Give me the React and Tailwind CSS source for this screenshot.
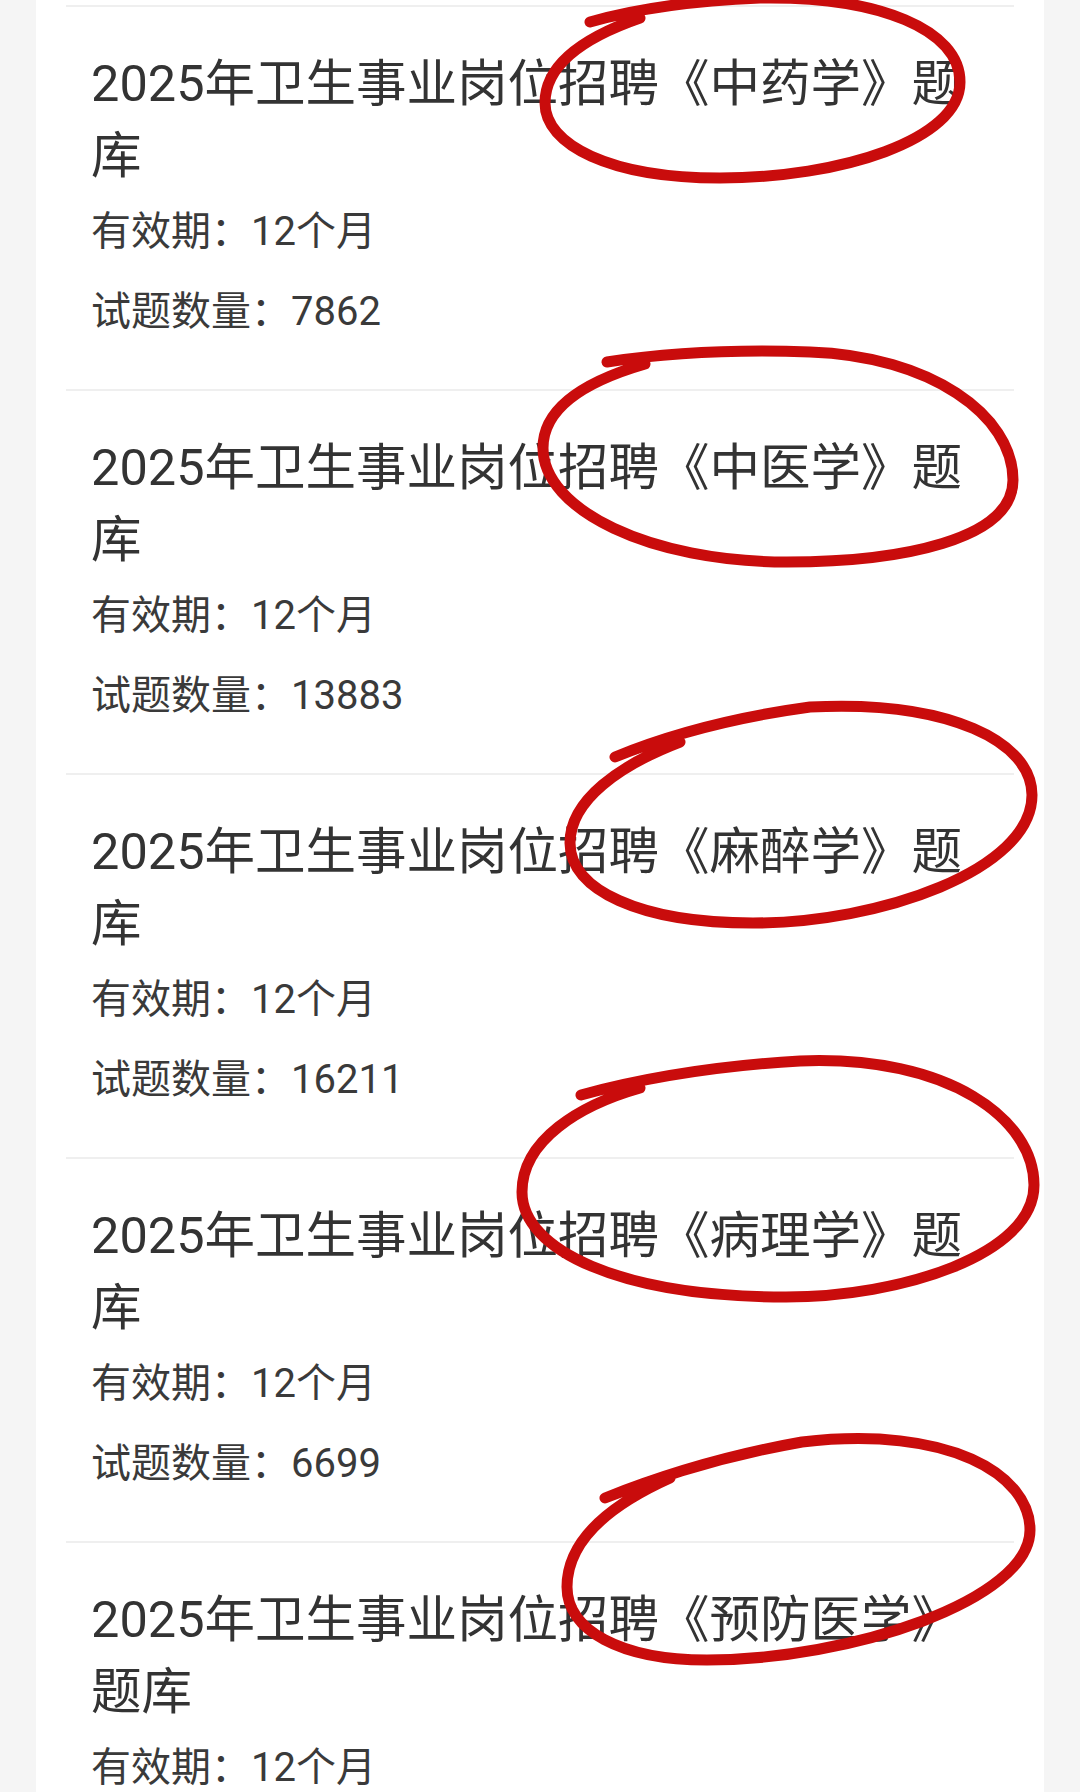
const items = [
  { name: '中药学', count: '7862' },
  { name: '中医学', count: '13883' },
  { name: '麻醉学', count: '16211' },
  { name: '病理学', count: '6699' },
  { name: '预防医学', count: '' },
];

// hand-drawn red marks over each subject name
const marks = [
  'M 590 22 Q 660 2 760 -2 C 880 -4 960 30 960 82 C 960 140 840 178 720 178 C 610 178 545 145 545 103 C 545 62 588 36 640 18',
  'M 607 362 Q 700 348 810 352 C 930 356 1013 415 1013 480 C 1013 540 900 562 787 562 C 650 562 543 510 543 448 C 543 405 590 380 645 364',
  'M 615 757 Q 700 722 810 707 C 950 700 1032 742 1032 795 C 1032 870 880 923 753 923 C 640 923 570 890 570 843 C 570 800 620 765 680 742',
  'M 581 1095 Q 680 1068 800 1061 C 950 1055 1034 1120 1034 1185 C 1034 1255 900 1297 786 1297 C 620 1297 522 1250 522 1192 C 522 1140 580 1105 640 1088',
  'M 605 1498 Q 700 1460 802 1442 C 950 1425 1030 1475 1030 1530 C 1030 1600 850 1660 707 1660 C 620 1660 567 1630 567 1587 C 567 1540 610 1505 670 1478',
];

function BankItem({ name, count }) {
  return (
    <div className="border-t-2 border-[#efefef] pt-[41px] pb-[47px] pl-[25px] pr-[25px]">
      <h3 className="text-[50.5px] leading-[72px] text-[#333333] font-normal">
        2025年卫生事业岗位招聘《{name}》题库
      </h3>
      <p className="mt-[10px] text-[40px] leading-[60px] text-[#3a3a3a]">有效期：12个月</p>
      <p className="mt-[20px] text-[40px] leading-[60px] text-[#3a3a3a]">
        试题数量：{count}
      </p>
    </div>
  );
}

export default function App() {
  return (
    <div
      className="relative h-[1792px] w-[1080px] overflow-hidden bg-[#f5f5f5]"
      style={{ fontFamily: 'Roboto, "Noto Sans CJK SC", sans-serif' }}
    >
      <div className="mx-[36px] h-full bg-white px-[30px] pt-[5px]">
        {items.map((item) => (
          <BankItem key={item.name} {...item} />
        ))}
      </div>

      {/* red annotation circles */}
      <svg
        className="pointer-events-none absolute inset-0"
        width="1080"
        height="1792"
        viewBox="0 0 1080 1792"
        fill="none"
      >
        {marks.map((d, i) => (
          <path
            key={i}
            d={d}
            stroke="#c90c0c"
            strokeWidth="11"
            strokeLinecap="round"
            strokeLinejoin="round"
          />
        ))}
      </svg>
    </div>
  );
}
